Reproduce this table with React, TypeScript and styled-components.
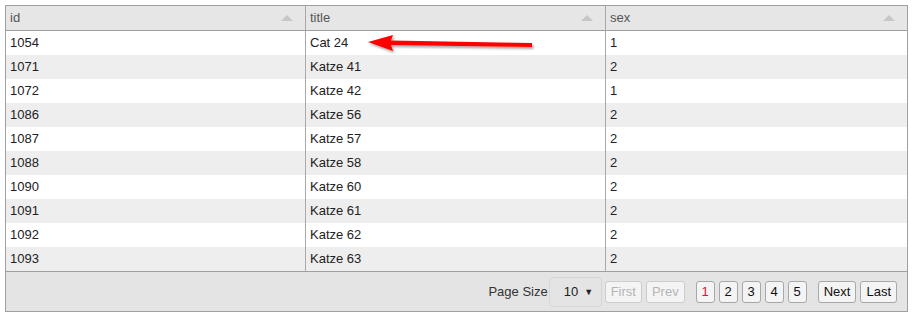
import React from 'react';
import styled, { createGlobalStyle } from 'styled-components';

const rows = [
  { id: 1054, title: 'Cat 24', sex: 1 },
  { id: 1071, title: 'Katze 41', sex: 2 },
  { id: 1072, title: 'Katze 42', sex: 1 },
  { id: 1086, title: 'Katze 56', sex: 2 },
  { id: 1087, title: 'Katze 57', sex: 2 },
  { id: 1088, title: 'Katze 58', sex: 2 },
  { id: 1090, title: 'Katze 60', sex: 2 },
  { id: 1091, title: 'Katze 61', sex: 2 },
  { id: 1092, title: 'Katze 62', sex: 2 },
  { id: 1093, title: 'Katze 63', sex: 2 },
];

const columns = ['id', 'title', 'sex'];

const App: React.FC = () => (
  <Page>
    <Global />
    <Grid>
      <HeaderRow>
        {columns.map((c, i) => (
          <HeadCell key={c} last={i === columns.length - 1}>
            {c}
            <SortArrow />
          </HeadCell>
        ))}
      </HeaderRow>
      {rows.map((r, i) => (
        <Row key={r.id} odd={i % 2 === 1}>
          <Cell>{r.id}</Cell>
          <Cell>{r.title}</Cell>
          <Cell last>{r.sex}</Cell>
        </Row>
      ))}
      <Footer>
        <Label>Page Size</Label>
        <SizeSelect>
          10 <Caret>▼</Caret>
        </SizeSelect>
        <PagerGroup>
          <PageButton disabled>First</PageButton>
          <PageButton disabled>Prev</PageButton>
        </PagerGroup>
        <PagerGroup>
          {[1, 2, 3, 4, 5].map(n => (
            <PageButton key={n} current={n === 1} narrow>{n}</PageButton>
          ))}
        </PagerGroup>
        <PagerGroup>
          <PageButton>Next</PageButton>
          <PageButton>Last</PageButton>
        </PagerGroup>
      </Footer>
    </Grid>
    <Arrow width="180" height="26" viewBox="0 0 180 26">
      <defs>
        <filter id="sh" x="-10%" y="-40%" width="120%" height="200%">
          <feDropShadow dx="1.5" dy="2" stdDeviation="1.2" floodColor="#000" floodOpacity="0.35" />
        </filter>
      </defs>
      <path
        d="M8 11 L33 4 L31 9.5 L172 12 L172 16 L31 14 L33 20 Z"
        fill="#ff0000"
        filter="url(#sh)"
      />
    </Arrow>
  </Page>
);

const Global = createGlobalStyle`
  body {
    margin: 0;
    background: #fff;
    font-family: "Liberation Sans", Arial, sans-serif;
    font-size: 13px;
    color: #222;
  }
`;

const Page = styled.div`
  position: relative;
  padding: 5px;
`;

const Grid = styled.div`
  width: 901px;
  border: 1px solid #a0a0a0;
`;

const HeaderRow = styled.div`
  display: grid;
  grid-template-columns: 300px 300px 1fr;
  height: 24px;
  background: #e6e6e6;
  border-bottom: 1px solid #a0a0a0;
`;

const HeadCell = styled.div<{ last?: boolean }>`
  display: flex;
  align-items: center;
  padding: 0 4px 2px;
  color: #555;
  border-right: ${({ last }) => (last ? 'none' : '1px solid #a9a9a9')};
`;

const SortArrow = styled.span`
  margin-left: auto;
  margin-right: 8px;
  margin-top: 2px;
  width: 0;
  height: 0;
  border-left: 6px solid transparent;
  border-right: 6px solid transparent;
  border-bottom: 6px solid #c6c6c6;
`;

const Row = styled.div<{ odd: boolean }>`
  display: grid;
  grid-template-columns: 300px 300px 1fr;
  height: 24px;
  background: ${({ odd }) => (odd ? '#eeeeee' : '#ffffff')};
`;

const Cell = styled.div<{ last?: boolean }>`
  display: flex;
  align-items: center;
  padding: 0 4px 2px;
  border-right: ${({ last }) => (last ? 'none' : '1px solid #a9a9a9')};
`;

const Footer = styled.div`
  display: flex;
  align-items: center;
  justify-content: flex-end;
  height: 39px;
  padding-right: 10px;
  background: #e4e4e4;
  border-top: 1px solid #a0a0a0;
`;

const Label = styled.span`
  color: #333;
  margin-right: 1px;
`;

const SizeSelect = styled.div`
  display: flex;
  align-items: center;
  box-sizing: border-box;
  width: 53px;
  height: 30px;
  padding-left: 14px;
  border: 1px solid #d6d6d6;
  border-radius: 4px;
  color: #222;
  white-space: nowrap;
`;

const Caret = styled.span`
  font-size: 9px;
  margin-left: 6px;
`;

const PagerGroup = styled.div`
  display: flex;
  gap: 4px;
  margin-left: 3px;
  & + & {
    margin-left: 11px;
  }
`;

const PageButton = styled.button<{ current?: boolean; narrow?: boolean }>`
  box-sizing: border-box;
  height: 22px;
  min-width: ${({ narrow }) => (narrow ? '19px' : '0')};
  padding: 0 ${({ narrow }) => (narrow ? '0' : '5px')};
  font-family: "Liberation Sans", Arial, sans-serif;
  font-size: 13px;
  background: #f4f4f4;
  border: 1px solid ${({ disabled }) => (disabled ? '#cdcdcd' : '#a8a8a8')};
  border-radius: 3px;
  color: ${({ disabled, current }) => (disabled ? '#b4b4b4' : current ? '#e0103c' : '#111')};
  cursor: pointer;
`;

const Arrow = styled.svg`
  position: absolute;
  left: 360px;
  top: 31px;
  pointer-events: none;
`;

export default App;
